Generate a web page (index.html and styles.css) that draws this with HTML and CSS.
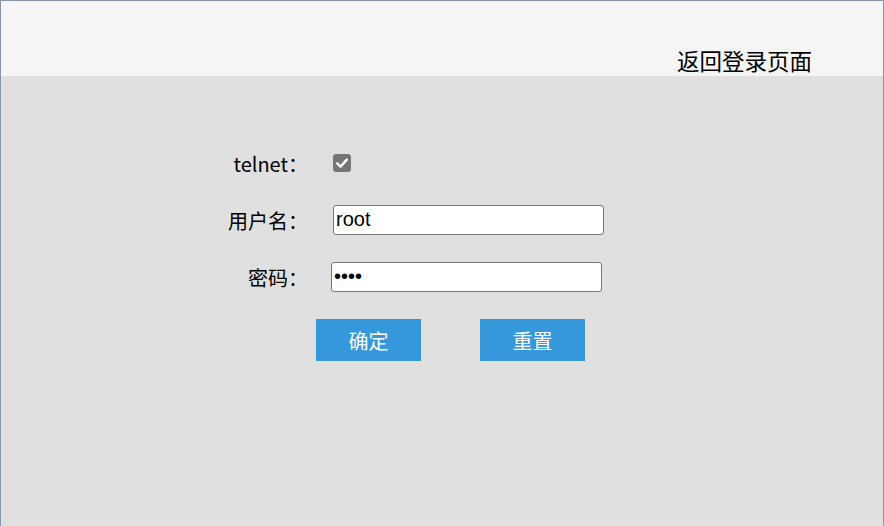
FILE: index.html
```html
<!DOCTYPE html>
<html lang="zh-CN">
<head>
<meta charset="utf-8">
<title>telnet</title>
<link rel="stylesheet" href="styles.css">
</head>
<body>
<div class="frame">
  <header class="header">
    <a class="back" href="#">返回登录页面</a>
  </header>
  <main class="content">
    <form class="form">
      <div class="row">
        <label class="label">telnet：</label>
        <span class="check">
          <svg width="18" height="18" viewBox="0 0 18 18"><rect x="0" y="0" width="18" height="18" rx="3" fill="#767676"/><path d="M4.2 9.4 L7.6 12.6 L13.8 5.6" fill="none" stroke="#fff" stroke-width="2.4" stroke-linecap="round" stroke-linejoin="round"/></svg>
        </span>
      </div>
      <div class="row">
        <label class="label">用户名：</label>
        <input class="input" type="text" value="root">
      </div>
      <div class="row">
        <label class="label">密码：</label>
        <input class="input input-pw" type="password" value="1234">
      </div>
      <div class="buttons">
        <button class="btn" type="button">确定</button>
        <button class="btn" type="button">重置</button>
      </div>
    </form>
  </main>
</div>
</body>
</html>
```
FILE: styles.css
```css
html, body {
  margin: 0;
  padding: 0;
  height: 100%;
}
body {
  font-family: "Noto Sans CJK SC", "Noto Sans", sans-serif;
  color: #000;
  overflow: hidden;
}
.frame {
  box-sizing: border-box;
  height: 526px;
  border: 1px solid #8b93b3;
  border-bottom: none;
  background: #e0e0e0;
  display: flex;
  flex-direction: column;
}
.header {
  height: 75px;
  background: #f5f5f5;
  display: flex;
  justify-content: flex-end;
  align-items: flex-end;
  padding-right: 71px;
}
.back {
  font-size: 22.5px;
  line-height: 28px;
  color: #000;
  text-decoration: none;
  margin-bottom: 2px;
}
.content {
  flex: 1;
}
.form {
  padding-top: 58px;
  padding-left: 197px;
}
.row {
  display: flex;
  align-items: center;
  height: 57px;
}
.label {
  width: 110px;
  text-align: right;
  font-size: 20px;
  line-height: 26px;
  padding-top: 3px;
}
.check {
  display: flex;
  margin-left: 25px;
}
.input {
  box-sizing: border-box;
  width: 271px;
  height: 30px;
  margin-left: 25px;
  padding: 1px 2px;
  border: 1px solid #767676;
  border-radius: 3px;
  background: #fff;
  font-family: "Liberation Sans", Arial, sans-serif;
  font-size: 20px;
  color: #000;
  outline: none;
}
.input-pw {
  margin-left: 23px;
}
.buttons {
  display: flex;
  gap: 59px;
  margin-top: 14px;
  padding-left: 118px;
}
.btn {
  width: 105px;
  height: 42px;
  border: none;
  background: #3498db;
  color: #fff;
  font-family: "Noto Sans CJK SC", sans-serif;
  font-size: 20px;
  padding: 0;
  cursor: pointer;
}
```
